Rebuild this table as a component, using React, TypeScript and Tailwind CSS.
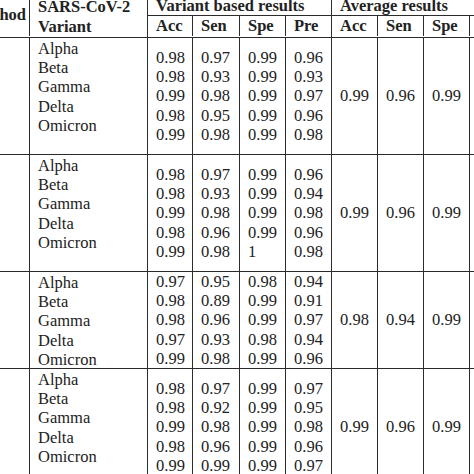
import React from "react";

type Group = {
  h: string;
  acc: string[];
  sen: string[];
  spe: string[];
  pre: string[];
  avg: [string, string, string];
};

const variants = ["Alpha", "Beta", "Gamma", "Delta", "Omicron"];

const groups: Group[] = [
  {
    h: "h-[117px]",
    acc: ["0.98", "0.98", "0.99", "0.98", "0.99"],
    sen: ["0.97", "0.93", "0.98", "0.95", "0.98"],
    spe: ["0.99", "0.99", "0.99", "0.99", "0.99"],
    pre: ["0.96", "0.93", "0.97", "0.96", "0.98"],
    avg: ["0.99", "0.96", "0.99"],
  },
  {
    h: "h-[117px]",
    acc: ["0.98", "0.98", "0.99", "0.98", "0.99"],
    sen: ["0.97", "0.93", "0.98", "0.96", "0.98"],
    spe: ["0.99", "0.99", "0.99", "0.99", "1"],
    pre: ["0.96", "0.94", "0.98", "0.96", "0.98"],
    avg: ["0.99", "0.96", "0.99"],
  },
  {
    h: "h-[97px]",
    acc: ["0.97", "0.98", "0.98", "0.97", "0.99"],
    sen: ["0.95", "0.89", "0.96", "0.93", "0.98"],
    spe: ["0.98", "0.99", "0.99", "0.98", "0.99"],
    pre: ["0.94", "0.91", "0.97", "0.94", "0.96"],
    avg: ["0.98", "0.94", "0.99"],
  },
  {
    h: "h-[117px]",
    acc: ["0.98", "0.98", "0.99", "0.98", "0.99"],
    sen: ["0.97", "0.92", "0.98", "0.96", "0.99"],
    spe: ["0.99", "0.99", "0.99", "0.99", "0.99"],
    pre: ["0.97", "0.95", "0.98", "0.96", "0.97"],
    avg: ["0.99", "0.96", "0.99"],
  },
];

const B = "border-[#2b2b2b]";

function ValCell({ w, vals }: { w: string; vals: string[] }) {
  return (
    <div className={`${w} shrink-0 border-r-[1.5px] ${B} flex flex-col justify-center pl-[8px] leading-[19.2px]`}>
      {vals.map((v, i) => (
        <div key={i}>{v}</div>
      ))}
    </div>
  );
}

function AvgCell({ w, v }: { w: string; v: string }) {
  return (
    <div className={`${w} shrink-0 border-r-[1.5px] ${B} flex items-center pl-[8px] leading-[19.2px]`}>
      {v}
    </div>
  );
}

export default function App() {
  return (
    <div className="w-[474px] h-[474px] overflow-hidden bg-white">
      <div
        className="ml-[-40px] mt-[-5px] flex flex-col text-[16.5px] text-[#222]"
        style={{ fontFamily: '"Liberation Serif", "Times New Roman", serif' }}
      >
        {/* Header */}
        <div className={`flex border-b-[1.5px] ${B}`}>
          <div className={`w-[70px] shrink-0 h-[41px] border-r-[1.5px] ${B} flex items-center justify-end pr-[3px] font-bold`}>
            Method
          </div>
          <div className={`w-[118px] shrink-0 border-r-[1.5px] ${B} pl-[8px] pt-[2px] font-bold leading-[20px]`}>
            <div>SARS-CoV-2</div>
            <div>Variant</div>
          </div>
          <div className={`w-[184px] shrink-0 border-r-[1.5px] ${B} flex flex-col font-bold`}>
            <div className={`h-[21px] border-b-[1.5px] ${B} pl-[8px] leading-[20px] pt-[1px]`}>Variant based results</div>
            <div className="flex h-[20px] leading-[20px]">
              <div className={`w-[45px] shrink-0 border-r-[1.5px] ${B} pl-[8px]`}>Acc</div>
              <div className={`w-[47px] shrink-0 border-r-[1.5px] ${B} pl-[8px]`}>Sen</div>
              <div className={`w-[46px] shrink-0 border-r-[1.5px] ${B} pl-[8px]`}>Spe</div>
              <div className="w-[46px] shrink-0 pl-[8px]">Pre</div>
            </div>
          </div>
          <div className={`w-[184px] shrink-0 border-r-[1.5px] ${B} flex flex-col font-bold`}>
            <div className={`h-[21px] border-b-[1.5px] ${B} pl-[8px] leading-[20px] pt-[1px] whitespace-nowrap`}>Average results</div>
            <div className="flex h-[20px] leading-[20px]">
              <div className={`w-[46px] shrink-0 border-r-[1.5px] ${B} pl-[8px]`}>Acc</div>
              <div className={`w-[46px] shrink-0 border-r-[1.5px] ${B} pl-[8px]`}>Sen</div>
              <div className={`w-[46px] shrink-0 border-r-[1.5px] ${B} pl-[8px]`}>Spe</div>
              <div className="w-[46px] shrink-0 pl-[8px]">Pre</div>
            </div>
          </div>
        </div>

        {groups.map((g, gi) => (
          <div key={gi} className={`flex ${g.h} shrink-0 border-b-[1.5px] ${B}`}>
            <div className={`w-[70px] shrink-0 border-r-[1.5px] ${B}`} />
            <div className={`w-[118px] shrink-0 border-r-[1.5px] ${B} pl-[8px] pt-[1px] leading-[19.2px]`}>
              {variants.map((v) => (
                <div key={v}>{v}</div>
              ))}
            </div>
            <ValCell w="w-[45px]" vals={g.acc} />
            <ValCell w="w-[47px]" vals={g.sen} />
            <ValCell w="w-[46px]" vals={g.spe} />
            <ValCell w="w-[46px]" vals={g.pre} />
            <AvgCell w="w-[46px]" v={g.avg[0]} />
            <AvgCell w="w-[46px]" v={g.avg[1]} />
            <AvgCell w="w-[46px]" v={g.avg[2]} />
            <div className={`w-[46px] shrink-0 border-r-[1.5px] ${B}`} />
          </div>
        ))}
      </div>
    </div>
  );
}
